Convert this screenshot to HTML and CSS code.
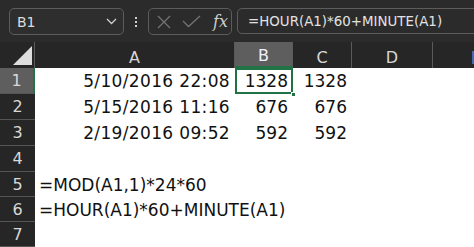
FILE: index.html
```html
<!DOCTYPE html>
<html lang="en">
<head>
    <meta charset="UTF-8">
    <title>Sheet - minutes from time</title>
    <link rel="stylesheet" href="styles.css">
</head>
<body>
    <div class="toolbar">
        <div class="namebox">
            <span>B1</span>
            <svg width="11" height="7" viewBox="0 0 11 7"><polyline points="1,1 5.5,5.5 10,1" fill="none" stroke="#cfcfcf" stroke-width="1.3"/></svg>
        </div>
        <div class="grip"><i></i><i></i><i></i></div>
        <div class="fnbox">
            <svg width="14" height="14" viewBox="0 0 14 14"><path d="M1 1 L13 13 M13 1 L1 13" stroke="#737373" stroke-width="1.3"/></svg>
            <svg width="19" height="13" viewBox="0 0 19 13"><polyline points="1,6 6.5,11.5 18,1" fill="none" stroke="#737373" stroke-width="1.3"/></svg>
            <span class="fx">fx</span>
        </div>
        <div class="formula">=HOUR(A1)*60+MINUTE(A1)</div>
    </div>

    <div class="sheet">
        <div class="corner"><span class="tri"></span></div>
        <div class="colhead">A</div>
        <div class="colhead sel">B</div>
        <div class="colhead">C</div>
        <div class="colhead">D</div>
        <div class="colhead last"><span class="blip"></span></div>

        <div class="rowhead sel">1</div>
        <div class="cell num date">5/10/2016 22:08</div>
        <div class="cell num active">1328</div>
        <div class="cell num">1328</div>
        <div class="cell"></div>
        <div class="cell"></div>

        <div class="rowhead">2</div>
        <div class="cell num date">5/15/2016 11:16</div>
        <div class="cell num">676</div>
        <div class="cell num">676</div>
        <div class="cell"></div>
        <div class="cell"></div>

        <div class="rowhead">3</div>
        <div class="cell num date">2/19/2016 09:52</div>
        <div class="cell num">592</div>
        <div class="cell num">592</div>
        <div class="cell"></div>
        <div class="cell"></div>

        <div class="rowhead">4</div>
        <div class="cell"></div>
        <div class="cell"></div>
        <div class="cell"></div>
        <div class="cell"></div>
        <div class="cell"></div>

        <div class="rowhead">5</div>
        <div class="cell text">=MOD(A1,1)*24*60</div>
        <div class="cell"></div>
        <div class="cell"></div>
        <div class="cell"></div>
        <div class="cell"></div>

        <div class="rowhead">6</div>
        <div class="cell text">=HOUR(A1)*60+MINUTE(A1)</div>
        <div class="cell"></div>
        <div class="cell"></div>
        <div class="cell"></div>
        <div class="cell"></div>

        <div class="rowhead">7</div>
        <div class="cell"></div>
        <div class="cell"></div>
        <div class="cell"></div>
        <div class="cell"></div>
        <div class="cell"></div>
    </div>
</body>
</html>
```

FILE: styles.css
```css
body {
    margin: 0;
    background: #fff;
    font-family: "DejaVu Sans", sans-serif;
    overflow: hidden;
}

.toolbar {
    height: 42px;
    box-sizing: border-box;
    background: #2b2b2b;
    display: flex;
    align-items: flex-start;
    padding: 8px 0 0 9px;
}

.namebox {
    width: 115px;
    height: 27px;
    box-sizing: border-box;
    border: 1px solid #5c5c5c;
    border-radius: 5px;
    background: #2e2e2e;
    display: flex;
    align-items: center;
    justify-content: space-between;
    padding: 0 6px 0 7px;
    color: #dcdcdc;
    font-size: 14px;
}

.grip {
    width: 24px;
    height: 27px;
    display: flex;
    flex-direction: column;
    align-items: center;
    justify-content: center;
    gap: 2px;
}

.grip i {
    width: 2px;
    height: 2px;
    background: #cfcfcf;
}

.fnbox {
    width: 84px;
    height: 27px;
    box-sizing: border-box;
    border: 1px solid #5c5c5c;
    border-radius: 5px;
    display: flex;
    align-items: center;
    gap: 11px;
    padding-left: 8px;
}

.fx {
    font-family: "DejaVu Serif", serif;
    font-style: italic;
    font-size: 16px;
    color: #cfcfcf;
    margin-left: 1px;
}

.formula {
    flex: 1;
    height: 26px;
    box-sizing: border-box;
    margin: 0 -10px 0 5px;
    border: 1px solid #5c5c5c;
    border-radius: 5px;
    display: flex;
    align-items: center;
    padding: 1px 0 0 10px;
    color: #e2e2e2;
    font-size: 13.4px;
}

.sheet {
    display: grid;
    grid-template-columns: 35px 200px 58px 59px 81px 1fr;
    grid-template-rows: 26px 26px 26px 26px 26px 25px 25px 25px;
}

.corner {
    background: #262626;
    border-right: 1px solid #5a5a5a;
    display: flex;
    justify-content: flex-end;
    align-items: flex-end;
    padding: 0 2px 3px 0;
}

.tri {
    width: 19px;
    height: 19px;
    background: #dedede;
    clip-path: polygon(100% 0, 100% 100%, 0 100%);
}

.colhead {
    background: #262626;
    border-right: 1px solid #5a5a5a;
    color: #d8d8d8;
    font-size: 16px;
    display: flex;
    align-items: center;
    justify-content: center;
    padding-top: 4px;
}

.colhead.sel {
    background: #5e5e5e;
    color: #eef0ff;
    border-bottom: 2px solid #217346;
    padding-top: 2px;
}

.colhead.last {
    border-right: none;
    justify-content: flex-end;
}

.blip {
    width: 2px;
    height: 13px;
    background: #4766b0;
}

.rowhead {
    background: #262626;
    border-bottom: 1px solid #555;
    color: #d8d8d8;
    font-size: 16px;
    display: flex;
    align-items: center;
    justify-content: center;
}

.rowhead.sel {
    background: #5e5e5e;
    border-right: 2px solid #217346;
}

.cell {
    position: relative;
    color: #111;
    font-size: 17px;
    display: flex;
    align-items: center;
    white-space: nowrap;
}

.cell.num {
    justify-content: flex-end;
    padding-right: 5px;
}

.cell.date {
    letter-spacing: 0.35px;
}

.cell.text {
    padding-left: 4px;
    overflow: visible;
}

.cell.active {
    box-shadow: inset 0 0 0 2px #217346;
}

.cell.active::after {
    content: "";
    position: absolute;
    right: -3px;
    bottom: -3px;
    width: 5px;
    height: 5px;
    background: #217346;
    border: 1px solid #fff;
    box-sizing: border-box;
}
```
